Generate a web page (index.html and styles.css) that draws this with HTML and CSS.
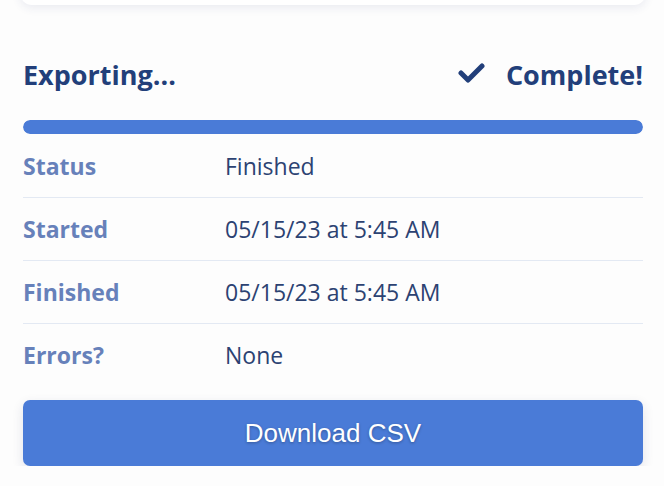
FILE: index.html
```html
<!DOCTYPE html>
<html lang="en">
<head>
    <meta charset="UTF-8">
    <meta name="viewport" content="width=device-width, initial-scale=1.0">
    <title>Export</title>
    <link rel="stylesheet" href="styles.css">
</head>
<body>
    <div class="prev-card"></div>
    <div class="export">
        <div class="export-header">
            <span class="title">Exporting...</span>
            <span class="done">
                <svg class="check" width="28" height="22" viewBox="0 0 28 22">
                    <polyline points="3,11 10,18 24,4" fill="none" stroke="#223f7a" stroke-width="5" stroke-linecap="round" stroke-linejoin="round"/>
                </svg>
                Complete!
            </span>
        </div>
        <div class="progress"><div class="progress-fill" style="width: 100%"></div></div>
        <div class="details">
            <div class="row"><span class="label">Status</span><span class="value">Finished</span></div>
            <div class="row"><span class="label">Started</span><span class="value">05/15/23 at 5:45 AM</span></div>
            <div class="row"><span class="label">Finished</span><span class="value">05/15/23 at 5:45 AM</span></div>
            <div class="row"><span class="label">Errors?</span><span class="value">None</span></div>
        </div>
        <button class="download">Download CSV</button>
    </div>
</body>
</html>
```

FILE: styles.css
```css
:root {
    --heading-color: #223f7a;
    --label-color: #6781ba;
    --value-color: #2c4272;
    --accent: #4a7bd7;
    --divider: #e3e9f3;
}

body {
    margin: 0;
    padding: 0 21px 0 23px;
    background-color: #fdfdfd;
    font-family: 'Open Sans', 'Noto Sans', sans-serif;
    overflow: hidden;
}

.prev-card {
    height: 45px;
    margin: -40px -3px 0 -3px;
    background-color: #fff;
    border-radius: 0 0 12px 12px;
    box-shadow: 0 3px 10px rgba(40, 50, 120, 0.09);
}

.export-header {
    display: flex;
    justify-content: space-between;
    align-items: center;
    margin-top: 53px;
    height: 32px;
    color: var(--heading-color);
    font-size: 27px;
    font-weight: 700;
}

.done {
    display: flex;
    align-items: center;
    gap: 20px;
}

.check {
    display: block;
    margin-top: -2px;
}

.progress {
    margin-top: 30px;
    height: 14px;
    border-radius: 7px;
    background-color: var(--divider);
    overflow: hidden;
}

.progress-fill {
    height: 100%;
    background-color: var(--accent);
    border-radius: 7px;
}

.details {
    padding-top: 1px;
}

.row {
    display: flex;
    align-items: center;
    height: 62px;
    border-bottom: 1px solid var(--divider);
    font-size: 23px;
}

.row:last-child {
    border-bottom: none;
}

.label {
    width: 202px;
    color: var(--label-color);
    font-weight: 700;
}

.value {
    color: var(--value-color);
}

.download {
    display: block;
    width: 100%;
    height: 66px;
    margin-top: 14px;
    border: none;
    border-radius: 7px;
    background-color: var(--accent);
    color: #fff;
    font-family: 'Liberation Sans', Arial, sans-serif;
    font-size: 26px;
    text-shadow: 0 1px 3px rgba(0, 0, 0, 0.3);
    box-shadow: 0 4px 12px rgba(30, 40, 90, 0.12);
    cursor: pointer;
}
```
